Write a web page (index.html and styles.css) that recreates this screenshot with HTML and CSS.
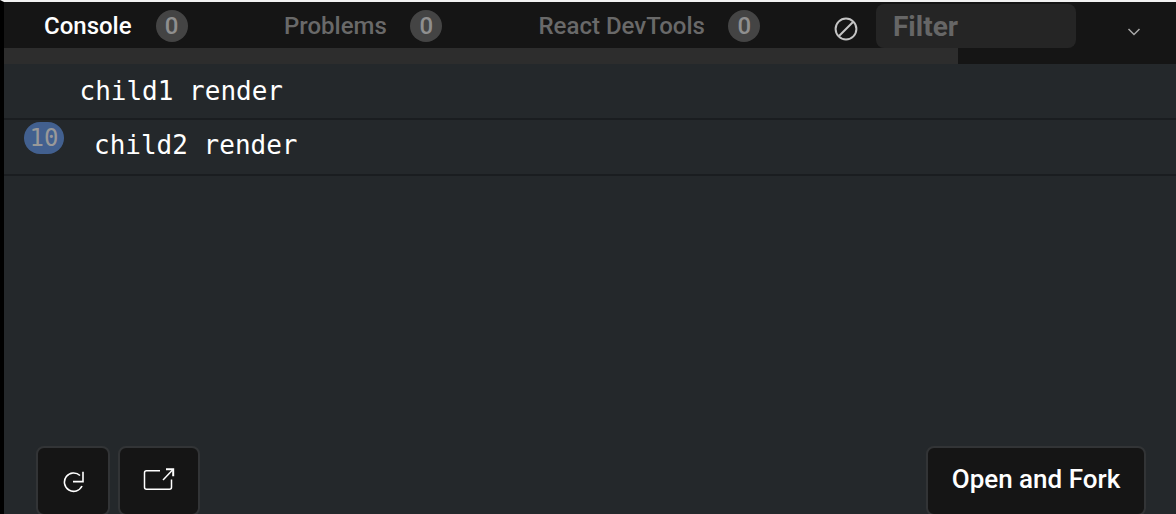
FILE: index.html
```html
<!DOCTYPE html>
<html lang="en">
<head>
<meta charset="utf-8">
<title>Console</title>
<link rel="stylesheet" href="styles.css">
</head>
<body>
<div class="app">
  <header class="tabs">
    <div class="tab tab-console"><span class="tab-label active">Console</span><span class="count">0</span></div>
    <div class="tab tab-problems"><span class="tab-label">Problems</span><span class="count">0</span></div>
    <div class="tab tab-devtools"><span class="tab-label">React DevTools</span><span class="count">0</span></div>
    <svg class="clear-icon" viewBox="0 0 24 24" width="24" height="24" fill="none" stroke="#c4c4c4" stroke-width="2"><circle cx="12" cy="12" r="10.4"/><path d="M5 19 19 5"/></svg>
    <div class="filter">Filter</div>
    <svg class="chevron" viewBox="0 0 14 10" width="14" height="10" fill="none" stroke="#a8a8a8" stroke-width="1.5"><path d="M1.5 2 7 7.5 12.5 2"/></svg>
  </header>
  <div class="scrollbar"><div class="thumb"></div></div>
  <main class="log">
    <div class="row row-one">child1 render</div>
    <div class="row row-two"><span class="repeat">10</span><span class="msg">child2 render</span></div>
  </main>
  <footer class="actions">
    <div class="icon-buttons">
      <button class="btn btn-refresh" type="button" aria-label="Refresh">
        <svg viewBox="0 0 22 22" width="22" height="22" fill="none" stroke="#fff" stroke-width="1.6"><path d="M18 4.5A9.2 9.2 0 1 0 20 15"/><path d="M21 .8V10.6H11"/></svg>
      </button>
      <button class="btn btn-open" type="button" aria-label="Open in new window">
        <svg viewBox="0 0 32 26" width="32" height="26" fill="none" stroke="#fff" stroke-width="1.5"><path d="M17 2.8H3.5a2 2 0 0 0-2 2V19.3a2 2 0 0 0 2 2h23a2 2 0 0 0 2-2V11.5"/><path d="M20 12 30 1.5"/><path d="M23 1.3h7.2v7" stroke-width="2"/></svg>
      </button>
    </div>
    <button class="btn btn-fork" type="button">Open and Fork</button>
  </footer>
</div>
</body>
</html>
```
FILE: styles.css
```css
* { box-sizing: border-box; }
html, body { margin: 0; height: 100%; overflow: hidden; background: #000; }
.app {
  width: 1176px;
  height: 514px;
  display: flex;
  flex-direction: column;
  border-top: 2px solid #f2f2f2;
  border-left: 4px solid #000;
  background: #24282b;
  font-family: Roboto, sans-serif;
  overflow: hidden;
}
.tabs {
  height: 46px;
  flex: none;
  display: flex;
  align-items: center;
  padding-top: 2px;
  background: #151515;
}
.tab { display: flex; align-items: center; flex: none; }
.tab-console { width: 280px; padding-left: 40px; }
.tab-problems { width: 254.5px; }
.tab-devtools { width: 295.5px; }
.tab-label {
  font-size: 24px;
  font-weight: 500;
  color: #696969;
  line-height: 44px;
}
.tab-label.active { color: #fff; }
.count {
  width: 32px;
  height: 32px;
  border-radius: 50%;
  background: #444;
  color: #8f8f8f;
  font-size: 24px;
  font-weight: 500;
  line-height: 32px;
  text-align: center;
}
.tab-console .count { margin-left: 24px; }
.tab-problems .count { margin-left: 23.5px; }
.tab-devtools .count { margin-left: 23.5px; }
.clear-icon { flex: none; margin: 6px 0 0 0; }
.filter {
  width: 200px;
  height: 44px;
  margin: 0 0 0 18px;
  padding-left: 17px;
  border-radius: 8px;
  background: #252525;
  color: #666;
  font-size: 28px;
  font-weight: 700;
  line-height: 46px;
  flex: none;
}
.chevron { flex: none; margin: 11px 0 0 51px; }
.scrollbar { height: 16px; flex: none; background: #151515; }
.thumb { width: 954px; height: 16px; background: #2d2d2d; }
.log { flex: 1; min-height: 0; }
.row {
  border-bottom: 2px solid #1a1d20;
  color: #fff;
  font-family: "DejaVu Sans Mono", monospace;
  font-size: 26px;
  white-space: pre;
}
.row-one { height: 56px; padding-left: 75.5px; line-height: 54px; }
.row-two { height: 56px; display: flex; line-height: 50px; }
.repeat {
  width: 40px;
  height: 32px;
  margin: 2px 0 0 20px;
  border-radius: 16px;
  background: #42608f;
  color: #999;
  font-size: 24px;
  line-height: 32px;
  text-align: center;
  flex: none;
}
.msg { margin-left: 30px; }
.actions {
  height: 68px;
  flex: none;
  display: flex;
  justify-content: space-between;
  padding: 0 30px 0 32px;
}
.icon-buttons { display: flex; gap: 8px; }
.btn {
  height: 70px;
  border: 2px solid #323436;
  border-radius: 8px;
  background: #151515;
  color: #fff;
  padding: 0;
  display: flex;
  align-items: center;
  justify-content: center;
  font-family: Roboto, sans-serif;
}
.btn-refresh { width: 74px; padding-top: 2px; }
.btn-open { width: 82px; }
.btn-fork {
  width: 220px;
  font-size: 26px;
  font-weight: 500;
  padding-bottom: 4px;
}
```
